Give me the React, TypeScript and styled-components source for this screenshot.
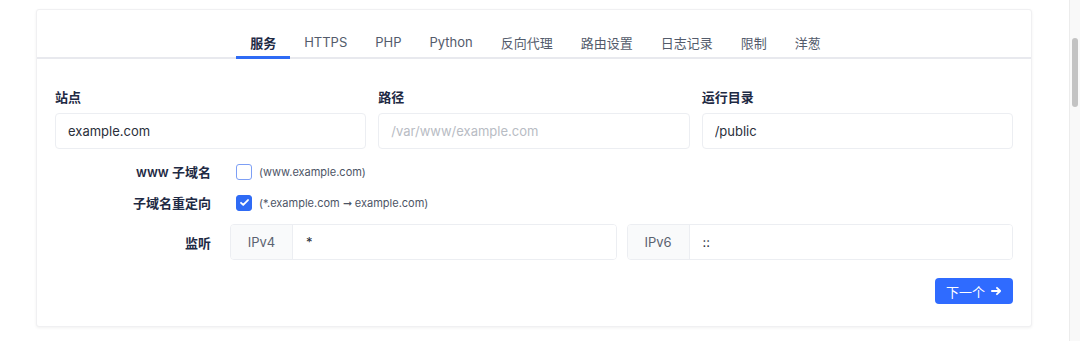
import React, { useState } from 'react';
import styled, { createGlobalStyle } from 'styled-components';

const GlobalStyle = createGlobalStyle`
  html, body {
    margin: 0;
    padding: 0;
    background: #ffffff;
    font-family: Inter, "Noto Sans CJK SC", sans-serif;
    overflow: hidden;
  }
  * { box-sizing: border-box; }
`;

const Screen = styled.div`
  display: flex;
  width: 1080px;
  height: 341px;
`;

const Main = styled.div`
  flex: 1;
  padding: 9px 37px 0 36px;
`;

const ScrollTrack = styled.div`
  width: 11px;
  background: #f9f9f9;
  border-left: 1px solid #ececec;
  padding: 38px 0 0 2px;
`;

const ScrollThumb = styled.div`
  width: 6px;
  height: 69px;
  border-radius: 3px;
  background: #c3c3c3;
`;

const Card = styled.div`
  border: 1px solid #f0f0f2;
  border-radius: 3px;
  background: #fff;
  box-shadow: 0 1px 3px rgba(0, 0, 0, 0.06);
  height: 318px;
`;

const TabBar = styled.nav`
  display: flex;
  justify-content: center;
  padding-top: 18px;
  padding-left: 3px;
  border-bottom: 2px solid #e8e9ee;
`;

const Tab = styled.button<{ $active?: boolean }>`
  border: none;
  background: none;
  font-family: Inter, "Noto Sans CJK SC", sans-serif;
  font-size: 13px;
  font-weight: ${p => (p.$active ? 600 : 400)};
  color: ${p => (p.$active ? '#1e2a44' : '#535b6b')};
  padding: 0 14px;
  height: 31px;
  margin-bottom: -2px;
  border-bottom: 3px solid ${p => (p.$active ? '#2f6bf5' : 'transparent')};
  cursor: pointer;
`;

const Body = styled.div`
  padding: 31px 18px 0 18px;
`;

const FieldGrid = styled.div`
  display: grid;
  grid-template-columns: repeat(3, 1fr);
  gap: 12px;
`;

const Field = styled.div`
  display: flex;
  flex-direction: column;
  gap: 9px;
`;

const FieldLabel = styled.label`
  font-size: 13px;
  font-weight: 600;
  color: #1e2a44;
  line-height: 14px;
`;

const TextInput = styled.input`
  height: 36px;
  border: 1px solid #eceef2;
  border-radius: 4px;
  padding: 0 12px;
  font-family: Inter, "Noto Sans CJK SC", sans-serif;
  font-size: 13px;
  color: #2a2f3a;
  outline: none;
  &::placeholder { color: #b8bcc4; }
`;

const Row = styled.div<{ $mt: number }>`
  display: grid;
  grid-template-columns: 175px 1fr;
  align-items: center;
  margin-top: ${p => p.$mt}px;
`;

const RowLabel = styled.div`
  text-align: right;
  padding-right: 19px;
  font-size: 13px;
  font-weight: 600;
  color: #1e2a44;
`;

const CheckLine = styled.label`
  display: flex;
  align-items: center;
  gap: 7px;
  padding-left: 6px;
  font-size: 11px;
  color: #4d5566;
  cursor: pointer;
`;

const Box = styled.span<{ $checked?: boolean }>`
  width: 16px;
  height: 16px;
  border-radius: 3px;
  border: 1.5px solid ${p => (p.$checked ? '#2f6bf5' : '#7d9ff5')};
  background: ${p => (p.$checked ? '#2f6bf5' : '#fff')};
  display: flex;
  align-items: center;
  justify-content: center;
`;

const Pair = styled.div`
  display: grid;
  grid-template-columns: 1fr 1fr;
  gap: 10px;
`;

const Group = styled.div`
  display: flex;
  height: 36px;
  border: 1px solid #eceef2;
  border-radius: 4px;
  overflow: hidden;
`;

const Addon = styled.span`
  width: 62px;
  display: flex;
  align-items: center;
  justify-content: center;
  background: #f9fafb;
  border-right: 1px solid #eceef2;
  font-size: 13px;
  color: #5b6270;
`;

const GroupInput = styled.input`
  flex: 1;
  border: none;
  outline: none;
  padding: 0 13px;
  font-family: Inter, "Noto Sans CJK SC", sans-serif;
  font-size: 13px;
  color: #2a2f3a;
`;

const Footer = styled.div`
  display: flex;
  justify-content: flex-end;
  margin-top: 18px;
`;

const NextButton = styled.button`
  display: flex;
  align-items: center;
  gap: 6px;
  height: 26px;
  padding: 0 11px;
  border: none;
  border-radius: 4px;
  background: #2f6bff;
  color: #fff;
  font-family: Inter, "Noto Sans CJK SC", sans-serif;
  font-size: 13px;
  cursor: pointer;
`;

const tabs = ['服务', 'HTTPS', 'PHP', 'Python', '反向代理', '路由设置', '日志记录', '限制', '洋葱'];

const Check = () => (
  <svg width="11" height="11" viewBox="0 0 12 12" fill="none">
    <path d="M2.2 6.3l2.4 2.4 5.2-5.4" stroke="#fff" strokeWidth="2" strokeLinecap="round" strokeLinejoin="round" />
  </svg>
);

const Arrow = () => (
  <svg width="11" height="10" viewBox="0 0 12 10" fill="none">
    <path d="M1 5h9M6.5 1.5L10 5 6.5 8.5" stroke="#fff" strokeWidth="2" strokeLinecap="round" strokeLinejoin="round" />
  </svg>
);

export default function App() {
  const [active, setActive] = useState(0);
  const [www, setWww] = useState(false);
  const [redirect, setRedirect] = useState(true);

  return (
    <>
      <GlobalStyle />
      <Screen>
        <Main>
          <Card>
            <TabBar>
              {tabs.map((t, i) => (
                <Tab key={t} $active={i === active} onClick={() => setActive(i)}>
                  {t}
                </Tab>
              ))}
            </TabBar>
            <Body>
              <FieldGrid>
                <Field>
                  <FieldLabel>站点</FieldLabel>
                  <TextInput defaultValue="example.com" />
                </Field>
                <Field>
                  <FieldLabel>路径</FieldLabel>
                  <TextInput placeholder="/var/www/example.com" />
                </Field>
                <Field>
                  <FieldLabel>运行目录</FieldLabel>
                  <TextInput defaultValue="/public" />
                </Field>
              </FieldGrid>

              <Row $mt={13}>
                <RowLabel>www 子域名</RowLabel>
                <CheckLine onClick={() => setWww(!www)}>
                  <Box $checked={www}>{www && <Check />}</Box>
                  (www.example.com)
                </CheckLine>
              </Row>
              <Row $mt={12}>
                <RowLabel>子域名重定向</RowLabel>
                <CheckLine onClick={() => setRedirect(!redirect)}>
                  <Box $checked={redirect}>{redirect && <Check />}</Box>
                  (*.example.com ➞ example.com)
                </CheckLine>
              </Row>
              <Row $mt={12}>
                <RowLabel>监听</RowLabel>
                <Pair>
                  <Group>
                    <Addon>IPv4</Addon>
                    <GroupInput defaultValue="*" />
                  </Group>
                  <Group>
                    <Addon>IPv6</Addon>
                    <GroupInput defaultValue="::" />
                  </Group>
                </Pair>
              </Row>

              <Footer>
                <NextButton>
                  下一个 <Arrow />
                </NextButton>
              </Footer>
            </Body>
          </Card>
        </Main>
        <ScrollTrack>
          <ScrollThumb />
        </ScrollTrack>
      </Screen>
    </>
  );
}
